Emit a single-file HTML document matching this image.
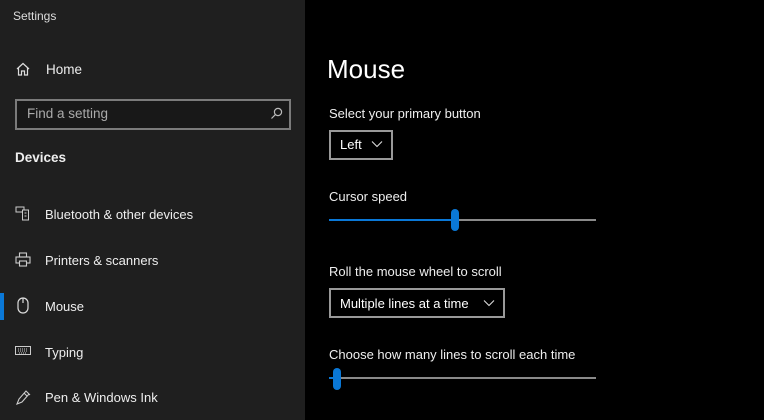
<!DOCTYPE html>
<html><head><style>
*{margin:0;padding:0;box-sizing:border-box}
body{width:764px;height:420px;overflow:hidden;background:#000;font-family:"Liberation Sans",sans-serif;color:#fff;position:relative}
.side{position:absolute;left:0;top:0;width:305px;height:420px;background:#1f1f1f}
.t{position:absolute;white-space:nowrap;line-height:1}
.ic{position:absolute}
.track{position:absolute;height:2px;background:#8a8a8a}
.fill{position:absolute;height:2px;background:#0a78d7}
.thumb{position:absolute;width:8px;height:22px;border-radius:4px;background:#0a78d7}
.dd{position:absolute;border:2px solid #999;height:30px}
</style></head><body>
<div class="side"></div>
<div class="t" style="left:13px;top:10px;font-size:12px;color:#ddd">Settings</div>
<svg class="ic" style="left:16px;top:62px" width="14" height="14" viewBox="0 0 14 14" fill="none" stroke="#ddd" stroke-width="1.2"><path d="M1 7 L7 1.5 L13 7 M2.5 5.8 V13 H5.5 V9 H8.5 V13 H11.5 V5.8"/></svg>
<div class="t" style="left:46px;top:63px;font-size:13.5px;color:#eee">Home</div>
<div style="position:absolute;left:15px;top:99px;width:276px;height:31px;border:2px solid #7b7b7b;background:#181818"></div>
<div class="t" style="left:27px;top:107px;font-size:13.5px;color:#aaa">Find a setting</div>
<svg class="ic" style="left:270px;top:107px" width="13" height="13" viewBox="0 0 13 13" fill="none" stroke="#bbb" stroke-width="1.2"><circle cx="8" cy="5" r="3.6"/><path d="M5.4 7.6 L1.5 11.5"/></svg>
<div class="t" style="left:15px;top:151px;font-size:13.5px;font-weight:bold;color:#eee">Devices</div>
<svg class="ic" style="left:15px;top:206px" width="16" height="15" viewBox="0 0 16 15" fill="none" stroke="#ccc" stroke-width="1"><rect x="1" y="1" width="8" height="5"/><rect x="7.5" y="4" width="6" height="10" fill="#1f1f1f"/><path d="M9.5 7h2M9.5 10h2"/></svg>
<div class="t" style="left:45px;top:208px;font-size:13px;color:#eee">Bluetooth &amp; other devices</div>
<svg class="ic" style="left:15px;top:252px" width="16" height="16" viewBox="0 0 16 16" fill="none" stroke="#ccc" stroke-width="1.1"><rect x="4.5" y="1" width="7" height="4"/><rect x="1" y="5" width="14" height="6"/><rect x="4.5" y="9" width="7" height="5" fill="#1f1f1f"/></svg>
<div class="t" style="left:45px;top:254px;font-size:13px;color:#eee">Printers &amp; scanners</div>
<div style="position:absolute;left:0;top:293px;width:4px;height:27px;background:#0a78d7"></div>
<svg class="ic" style="left:17px;top:297px" width="12" height="18" viewBox="0 0 12 18" fill="none" stroke="#ddd" stroke-width="1.2"><rect x="1" y="1" width="10" height="15" rx="5"/><path d="M6 1v5"/></svg>
<div class="t" style="left:45px;top:300px;font-size:13px;color:#eee">Mouse</div>
<svg class="ic" style="left:15px;top:346px" width="16" height="9" viewBox="0 0 16 9" fill="none" stroke="#ccc" stroke-width="1"><rect x="0.5" y="0.5" width="15" height="8"/><path d="M3 3h10M3 5h10M4 7h8" stroke-dasharray="1 1"/></svg>
<div class="t" style="left:45px;top:346px;font-size:13px;color:#eee">Typing</div>
<svg class="ic" style="left:15px;top:389px" width="16" height="17" viewBox="0 0 16 17" fill="none" stroke="#ccc" stroke-width="1.1"><path d="M2 15 L4 10 L11 2 L14 5 L7 13 Z M9 4 L12 7 M12 3 L15 6"/></svg>
<div class="t" style="left:45px;top:391px;font-size:13px;color:#eee">Pen &amp; Windows Ink</div>

<div class="t" style="left:327px;top:56px;font-size:26px;color:#fff">Mouse</div>
<div class="t" style="left:329px;top:107px;font-size:13px;color:#eee">Select your primary button</div>
<div class="dd" style="left:329px;top:130px;width:64px"></div>
<div class="t" style="left:340px;top:138px;font-size:13px">Left</div>
<svg class="ic" style="left:371px;top:140px" width="12" height="8" viewBox="0 0 12 8" fill="none" stroke="#ddd" stroke-width="1.1"><path d="M1 1.5 L6 6.5 L11 1.5"/></svg>
<div class="t" style="left:329px;top:190px;font-size:13px;color:#eee">Cursor speed</div>
<div class="track" style="left:329px;top:219px;width:267px"></div>
<div class="fill" style="left:329px;top:219px;width:125px"></div>
<div class="thumb" style="left:451px;top:209px"></div>
<div class="t" style="left:329px;top:265px;font-size:13px;color:#eee">Roll the mouse wheel to scroll</div>
<div class="dd" style="left:329px;top:288px;width:176px"></div>
<div class="t" style="left:340px;top:297px;font-size:13px">Multiple lines at a time</div>
<svg class="ic" style="left:483px;top:299px" width="12" height="8" viewBox="0 0 12 8" fill="none" stroke="#ddd" stroke-width="1.1"><path d="M1 1.5 L6 6.5 L11 1.5"/></svg>
<div class="t" style="left:329px;top:348px;font-size:13px;color:#eee">Choose how many lines to scroll each time</div>
<div class="track" style="left:329px;top:377px;width:267px"></div>
<div class="fill" style="left:329px;top:377px;width:6px"></div>
<div class="thumb" style="left:333px;top:368px"></div>
</body></html>
